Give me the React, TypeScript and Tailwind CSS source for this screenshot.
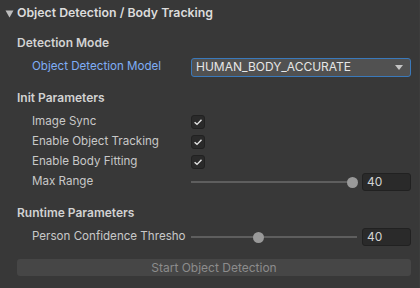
import { ReactNode } from 'react';

const font = { fontFamily: 'Inter, "Noto Sans", sans-serif' };

const SectionLabel = ({ children }: { children: ReactNode }) => (
    <div className="h-5 flex items-center text-[12px] font-semibold text-[#d2d2d2]">{children}</div>
);

const Row = ({ label, children, blue }: { label: string; children: ReactNode; blue?: boolean }) => (
    <div className="h-5 flex items-center">
        <div
            className={
                "w-[172px] pl-[15px] whitespace-nowrap text-[11.6px] " +
                (blue ? "text-[#7fadf5]" : "text-[#c8c8c8]")
            }
        >
            {label}
        </div>
        <div className="flex-1 ml-[2px] flex items-center pr-[8px]">{children}</div>
    </div>
);

const Check = () => (
    <div className="w-[14px] h-[14px] rounded-[3px] bg-[#2a2a2a] border border-[#212121] flex items-center justify-center">
        <svg width="10" height="10" viewBox="0 0 10 10">
            <path d="M1.6 5.3 L4 7.4 L8.5 2.7" fill="none" stroke="#e4e4e4" strokeWidth="1.4" />
        </svg>
    </div>
);

const Slider = ({ pct, value }: { pct: number; value: string }) => (
    <div className="flex items-center w-full">
        <div className="relative w-[166px] h-[12px] flex items-center">
            <div className="w-full h-[2px] bg-[#5e5e5e]" />
            <div
                className="absolute w-[11px] h-[11px] rounded-full bg-[#999999]"
                style={{ left: `${5 + pct * 156 - 5.5}px` }}
            />
        </div>
        <div className="ml-[5px] w-[49px] h-[18px] rounded-[3px] bg-[#2a2a2a] border border-[#212121] flex items-center pl-[4px] text-[12px] text-[#d2d2d2]">
            {value}
        </div>
    </div>
);

export default function App() {
    return (
        <div className="w-[420px] h-[288px] bg-[#383838] flex overflow-hidden" style={font}>
            <div className="flex-1 flex flex-col">
                {/* Foldout header */}
                <div className="h-[26px] flex items-center pl-[5px]">
                    <svg width="9" height="8" viewBox="0 0 9 8" className="mr-[3px] mt-[1px]">
                        <path d="M0.5 0.5 L8.5 0.5 L4.5 7.5 Z" fill="#bdbdbd" />
                    </svg>
                    <span className="text-[12.3px] font-semibold text-[#dcdcdc]">Object Detection / Body Tracking</span>
                </div>

                <div className="pl-[17px] flex flex-col">
                    <div className="mt-[7px]">
                        <SectionLabel>Detection Mode</SectionLabel>
                    </div>
                    <div className="mt-[4px]">
                        <Row label="Object Detection Model" blue>
                            <div className="w-full h-[19px] rounded-[3px] bg-[#515151] border border-[#3a79bb] flex items-center justify-between pl-[4px] pr-[7px]">
                                <span className="text-[12px] text-[#e6e6e6]">HUMAN_BODY_ACCURATE</span>
                                <svg width="8" height="5" viewBox="0 0 8 5">
                                    <path d="M0 0 L8 0 L4 5 Z" fill="#c4c4c4" />
                                </svg>
                            </div>
                        </Row>
                    </div>

                    <div className="mt-[11px]">
                        <SectionLabel>Init Parameters</SectionLabel>
                    </div>
                    <div className="mt-[4px] flex flex-col">
                        <Row label="Image Sync"><Check /></Row>
                        <Row label="Enable Object Tracking"><Check /></Row>
                        <Row label="Enable Body Fitting"><Check /></Row>
                        <Row label="Max Range"><Slider pct={1} value="40" /></Row>
                    </div>

                    <div className="mt-[11px]">
                        <SectionLabel>Runtime Parameters</SectionLabel>
                    </div>
                    <div className="mt-[4px]">
                        <Row label="Person Confidence Thresho"><Slider pct={0.4} value="40" /></Row>
                    </div>

                    <div className="mt-[12px] mr-[8px] h-[17px] rounded-[3px] bg-[#464646] flex items-center justify-center text-[12px] text-[#8c8c8c]">
                        Start Object Detection
                    </div>
                </div>
            </div>
            <div className="w-[1px] bg-[#262626]" />
            <div className="w-[3px] bg-[#3c3c3c]" />
        </div>
    );
}
